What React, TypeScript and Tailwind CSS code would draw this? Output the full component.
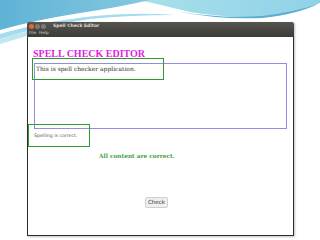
export default function App() {
  return (
    <div className="relative h-[240px] w-[320px] overflow-hidden bg-white">
      {/* slide background swoosh */}
      <svg className="absolute left-0 top-0" width="320" height="44" viewBox="0 0 320 44">
        <defs>
          <linearGradient id="lb" x1="0" y1="0" x2="1" y2="0">
            <stop offset="0" stopColor="#5fb3d6" />
            <stop offset="1" stopColor="#86c8e0" />
          </linearGradient>
          <linearGradient id="rc" x1="0" y1="0" x2="1" y2="0">
            <stop offset="0" stopColor="#a9dfec" />
            <stop offset="1" stopColor="#8fd2e6" />
          </linearGradient>
        </defs>
        <path d="M140 0 L320 0 L320 3 Q300 12 262 17 Q225 18 190 12 Q165 6 140 0 Z" fill="url(#rc)" />
        <path d="M175 11 Q220 19 262 16 Q295 12 318 4 Q298 14 262 18 Q220 20 175 11 Z" fill="#5aaed4" />
        <path d="M0 0 L150 0 Q120 7 80 13 Q35 20 0 30 Z" fill="url(#lb)" />
        <path d="M0 34 Q40 22 95 16 Q140 12 175 15 Q130 15 90 19 Q40 26 0 39 Z" fill="#a6dced" />
        <path d="M0 39 Q30 29 70 23 L0 44 Z" fill="#bfe6f1" />
      </svg>

      <div className="relative ml-[27px] mt-[22px] flex h-[214px] w-[267px] flex-col shadow-[1px_1px_2px_rgba(0,0,0,0.25)]">
        <div className="flex h-[15px] flex-col rounded-t-[2px] bg-gradient-to-b from-[#565550] to-[#3c3b37] px-[2px]">
          <div className="flex h-[8px] items-center gap-[1.5px] pt-[1px]">
            <span className="h-[4.5px] w-[4.5px] rounded-full bg-[#e9652f]" />
            <span className="h-[4.5px] w-[4.5px] rounded-full bg-[#7b7a75]" />
            <span className="h-[4.5px] w-[4.5px] rounded-full bg-[#7b7a75]" />
            <span className="ml-[6px] font-['DejaVu_Sans',sans-serif] text-[4.5px] font-bold leading-none text-[#dfdbd2]">
              Spell Check Editor
            </span>
          </div>
          <div className="flex h-[7px] items-center gap-[3px] font-['DejaVu_Sans',sans-serif] text-[4.2px] leading-none text-[#cfcbc2]">
            <span>File</span>
            <span>Help</span>
          </div>
        </div>

        <div className="relative flex flex-1 flex-col border-x border-b border-[#2c2c2c] bg-white">
          <div className="pl-[5px] pt-[12px] font-['Liberation_Serif',serif] text-[10px] font-bold leading-[10px] text-[#e01ee0]">
            SPELL CHECK EDITOR
          </div>
          <div className="ml-[6px] mt-[4px] h-[66px] w-[253px] border border-[#8f8fe0] px-[1px] pt-[1px] font-['DejaVu_Serif',serif] text-[6px] leading-[8px] text-[#333]">
            This is spell checker application.
          </div>
          <div className="pl-[6px] pt-[3px] font-['DejaVu_Sans',sans-serif] text-[4.7px] leading-[8px] text-[#555]">
            Spelling is correct.
          </div>
          <div className="pl-[71px] pt-[12px] font-['DejaVu_Serif',serif] text-[5.8px] font-bold leading-[8px] text-[#3fa03f]">
            All content are correct.
          </div>
          <div className="flex justify-center pt-[37px] pr-[8px]">
            <button className="h-[11px] rounded-[1.5px] border border-[#cfcfcf] bg-[#efefef] px-[2px] font-['DejaVu_Sans',sans-serif] text-[5.6px] leading-none text-[#333]">
              Check
            </button>
          </div>

          {/* annotation boxes */}
          <div className="absolute left-[4px] top-[21px] h-[22px] w-[132px] border-[1.5px] border-[#2f9b2f]" />
          <div className="absolute left-[0px] top-[87px] h-[23px] w-[62px] border-[1.5px] border-[#2f9b2f]" />
        </div>
      </div>
    </div>
  )
}
